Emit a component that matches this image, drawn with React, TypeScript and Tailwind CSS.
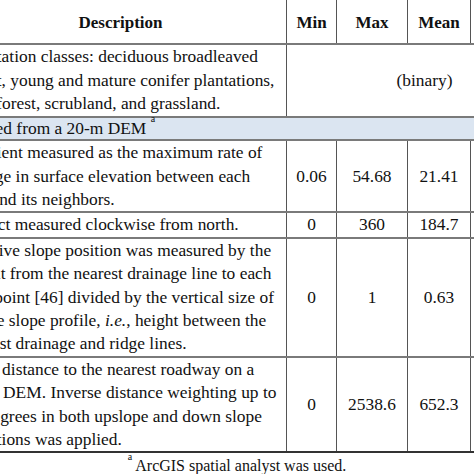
const serif = { fontFamily: '"Liberation Serif", "Times New Roman", serif' }

const cell = "border-x border-x-[#555] border-y-2 border-y-[#7a7a7a] p-0"
const desc = `${cell} pl-[7px] text-left align-top leading-[23.4px] whitespace-nowrap`
const num = `${cell} text-center align-middle`

type Row = { lines: React.ReactNode[]; min: string; max: string; mean: string; oneLine?: boolean }

const rows: Row[] = [
    {
        lines: [
            "Gradient measured as the maximum rate of",
            "change in surface elevation between each",
            "cell and its neighbors.",
        ],
        min: "0.06",
        max: "54.68",
        mean: "21.41",
    },
    {
        lines: ["Aspect measured clockwise from north."],
        min: "0",
        max: "360",
        mean: "184.7",
        oneLine: true,
    },
    {
        lines: [
            "Relative slope position was measured by the",
            "height from the nearest drainage line to each",
            "grid point [46] divided by the vertical size of",
            <>
                whole slope profile, <i>i.e.</i>, height between the
            </>,
            "nearest drainage and ridge lines.",
        ],
        min: "0",
        max: "1",
        mean: "0.63",
    },
    {
        lines: [
            "Flow distance to the nearest roadway on a",
            "20-m DEM. Inverse distance weighting up to",
            "30 degrees in both upslope and down slope",
            "directions was applied.",
        ],
        min: "0",
        max: "2538.6",
        mean: "652.3",
    },
]

const Lines = ({ lines }: { lines: React.ReactNode[] }) => (
    <>
        {lines.map((l, i) => (
            <div key={i}>{l}</div>
        ))}
    </>
)

const head = `${cell} border-t border-t-[#555] pt-[30px] pb-[9px] leading-[23.4px]`

export default function App() {
    return (
        <div className="w-[474px] h-[474px] overflow-hidden bg-white text-[#111]" style={serif}>
            <table className="table-fixed border-collapse w-[608px] ml-[-46px] mt-[-20px] text-[17.4px]">
                <colgroup>
                    <col className="w-[332px]" />
                    <col className="w-[50px]" />
                    <col className="w-[71px]" />
                    <col className="w-[63px]" />
                    <col className="w-[92px]" />
                </colgroup>
                <thead>
                    <tr className="font-bold text-[17px]">
                        <th className={head}>Description</th>
                        <th className={head}>Min</th>
                        <th className={head}>Max</th>
                        <th className={head}>Mean</th>
                        <th className={head}></th>
                    </tr>
                </thead>
                <tbody>
                    <tr>
                        <td className={desc}>
                            <Lines
                                lines={[
                                    "Vegetation classes: deciduous broadleaved",
                                    "forest, young and mature conifer plantations,",
                                    "pine forest, scrubland, and grassland.",
                                ]}
                            />
                        </td>
                        <td colSpan={4} className={`${num} leading-[23.4px]`}>
                            (binary)
                        </td>
                    </tr>
                    <tr>
                        <td colSpan={5} className={`${cell} pl-[1px] text-left leading-[21.5px] bg-[#dbe5f1] whitespace-nowrap`}>
                            Derived from a 20-m DEM <sup className="text-[10px] align-[7px]">a</sup>
                        </td>
                    </tr>
                    {rows.map((r, i) => {
                        const last = i === rows.length - 1 ? "border-b-[2.5px] border-b-[#333]" : ""
                        return (
                            <tr key={i}>
                                <td className={`${desc} ${r.oneLine ? "leading-[21.5px]" : ""} ${last}`}>
                                    <Lines lines={r.lines} />
                                </td>
                                {[r.min, r.max, r.mean, ""].map((v, j) => (
                                    <td
                                        key={j}
                                        className={`${num} ${r.oneLine ? "leading-[21.5px]" : "leading-[23.4px]"} ${last}`}
                                    >
                                        {v}
                                    </td>
                                ))}
                            </tr>
                        )
                    })}
                </tbody>
            </table>
            <p className="mt-[3px] text-center text-[16px] leading-5">
                <sup className="text-[10px] align-[6px]">a</sup> ArcGIS spatial analyst was used.
            </p>
        </div>
    )
}
